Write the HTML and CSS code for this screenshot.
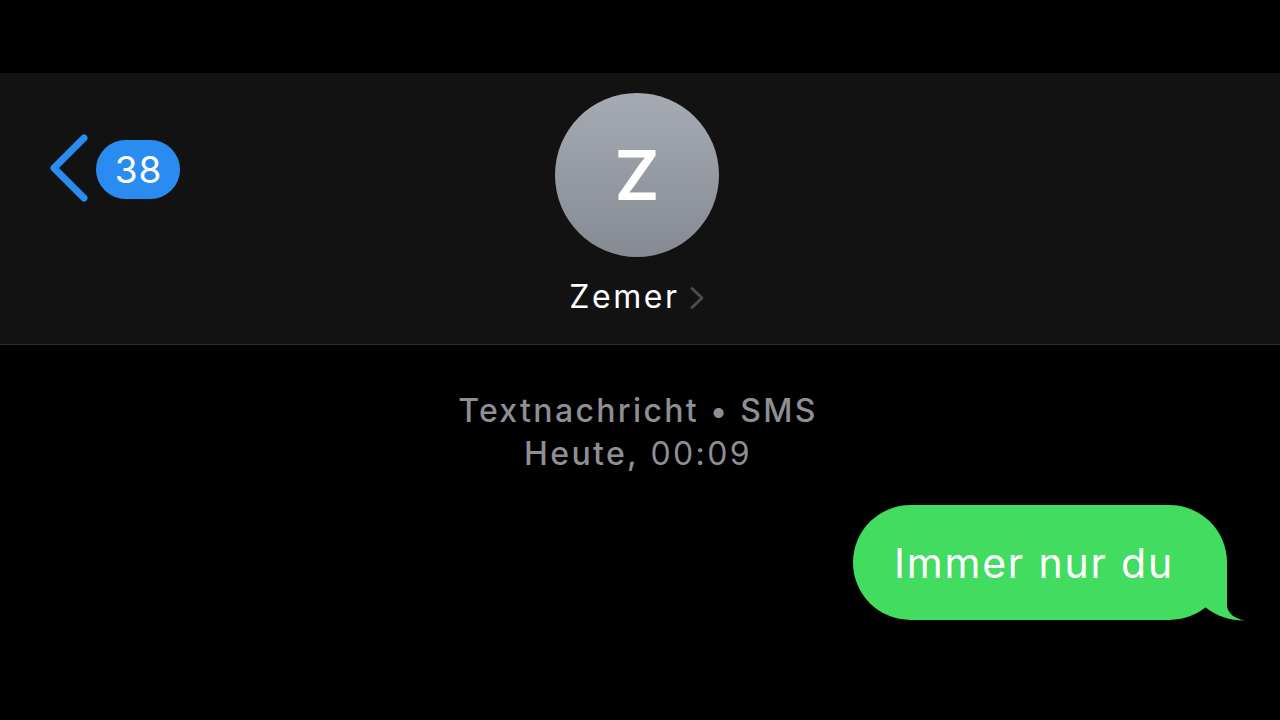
FILE: index.html
```html
<!DOCTYPE html>
<html lang="de">
<head>
<meta charset="utf-8">
<title>Zemer</title>
<link rel="stylesheet" href="styles.css">
</head>
<body>
<div class="screen">
  <div class="status"></div>
  <header class="nav">
    <div class="nav-left">
      <div class="back">
        <svg class="chev" width="44" height="72" viewBox="0 0 44 72"><path d="M38 6 L8 36 L38 66" fill="none" stroke="#2a8cf0" stroke-width="7" stroke-linecap="round" stroke-linejoin="round"/></svg>
        <span class="badge">38</span>
      </div>
    </div>
    <div class="nav-center">
      <div class="avatar">Z</div>
      <div class="name"><span>Zemer</span><svg class="name-chev" width="16" height="24" viewBox="0 0 16 24"><path d="M3 2.5 L13 12 L3 21.5" fill="none" stroke="#4c4c50" stroke-width="3" stroke-linecap="round" stroke-linejoin="round"/></svg></div>
    </div>
    <div class="nav-right"></div>
  </header>
  <main class="thread">
    <div class="meta">
      <div>Textnachricht • SMS</div>
      <div><b>Heute,</b> 00:09</div>
    </div>
    <div class="row">
      <div class="bubble">Immer nur du
        <svg class="tail" width="40" height="60" viewBox="0 0 40 60"><path d="M0 0 L22 0 L22 44 C22 52 30 58 40 59.5 C28 60 12 56 0 46 Z" fill="#41dc60"/></svg>
      </div>
    </div>
  </main>
</div>
</body>
</html>
```
FILE: styles.css
```css
* { box-sizing: border-box; }
html, body { margin: 0; padding: 0; background: #000; }
body { font-family: Inter, "Noto Sans", sans-serif; color: #fff; }
.screen { width: 1280px; height: 720px; display: flex; flex-direction: column; background: #000; overflow: hidden; }
.status { height: 73px; flex: none; }
.nav {
  height: 272px; flex: none;
  background: #121212;
  border-bottom: 1px solid #2a2a2a;
  display: grid;
  grid-template-columns: 1fr auto 1fr;
  padding-right: 6px;
}
.nav-left { padding-left: 46px; padding-top: 59px; }
.back { display: flex; align-items: center; gap: 6px; }
.chev { display: block; }
.badge {
  background: #2a8cf0;
  color: #fff;
  height: 59px;
  min-width: 84px;
  border-radius: 30px;
  display: flex; align-items: center; justify-content: center;
  font-size: 37px; font-weight: 400;
  letter-spacing: 1px;
  padding-left: 1px;
  margin-top: 2px;
}
.nav-center { display: flex; flex-direction: column; align-items: center; padding-top: 20px; }
.avatar {
  width: 164px; height: 164px; border-radius: 50%;
  background: linear-gradient(#a6aab3, #868a93);
  display: flex; align-items: center; justify-content: center;
  font-size: 69px; font-weight: 600; color: #fff;
}
.name {
  margin-top: 20px;
  font-size: 32px; font-weight: 400;
  letter-spacing: 2.6px;
  display: flex; align-items: center; gap: 9px;
  line-height: 40px;
}
.name-chev { display: block; margin-top: 1px; }
.thread { flex: 1; display: flex; flex-direction: column; }
.meta {
  margin-top: 44px;
  text-align: center;
  color: #8e8e93;
  font-size: 32px;
  line-height: 43px;
  font-weight: 500;
  letter-spacing: 2.35px;
  padding-right: 4px;
}
.meta b { font-weight: 500; }
.meta div:last-child { font-weight: 400; }
.row { display: flex; justify-content: flex-end; margin-top: 30px; padding-right: 53px; }
.bubble {
  position: relative;
  background: #41dc60;
  color: #fff;
  height: 115px;
  border-radius: 58px;
  padding: 0 53px 0 41px;
  display: flex; align-items: center;
  font-size: 41px; font-weight: 400;
  letter-spacing: 1.8px;
}
.tail { position: absolute; right: -18px; bottom: -1px; }
```
